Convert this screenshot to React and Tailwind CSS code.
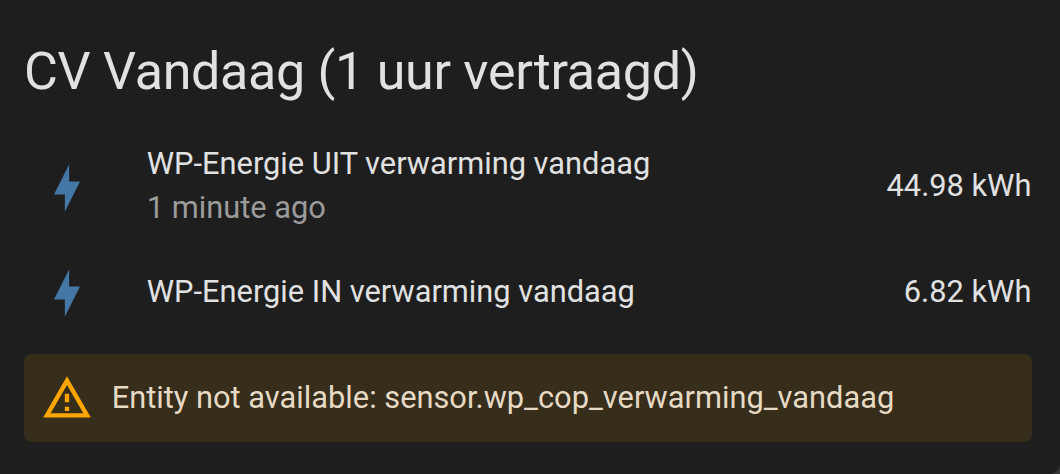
import React from 'react';

const entities = [
  { name: 'WP-Energie UIT verwarming vandaag', secondary: '1 minute ago', value: '44.98 kWh' },
  { name: 'WP-Energie IN verwarming vandaag', value: '6.82 kWh' },
];

function FlashIcon({ className }) {
  return (
    <svg viewBox="0 0 24 24" className={`w-[52px] h-[52px] shrink-0 fill-[#4477a4] ${className}`}>
      <path d="M11 15H6L13 1V9H18L11 23V15Z" />
    </svg>
  );
}

function AlertIcon() {
  return (
    <svg viewBox="0 0 24 24" className="w-[52px] h-[52px] -mt-px shrink-0 fill-[#ffa600]">
      <path d="M12,2L1,21H23M12,6L19.53,19H4.47M11,10V14H13V10M11,16V18H13V16" />
    </svg>
  );
}

function EntityRow({ name, secondary, value }) {
  return (
    <div className="flex items-center h-20 pl-[17.4px] pr-[4.6px]">
      <FlashIcon className={secondary ? 'mt-[4px]' : 'mt-[2px]'} />
      <div className="flex-1 ml-[53.4px] leading-[44px]">
        <div>{name}</div>
        {secondary && <div className="text-[#9b9b9b]">{secondary}</div>}
      </div>
      <div>{value}</div>
    </div>
  );
}

export default function App() {
  return (
    <div className="w-[1060px] h-[474px] bg-[#383838] overflow-hidden">
      <div className="w-full h-full bg-[#1e1e1e] rounded-br-[10px] px-6 pt-6 font-[Roboto,sans-serif] text-[30.8px] text-[#e1e1e1] whitespace-nowrap">
        <h1 className="h-[96px] leading-[96px] text-[52px] tracking-[-0.29px]">CV Vandaag (1 uur vertraagd)</h1>
        <div className="flex flex-col gap-[26px] pt-[26px]">
          {entities.map((entity) => (
            <EntityRow key={entity.name} {...entity} />
          ))}
        </div>
        {/* warning for entities that can't be found */}
        <div className="flex items-center h-22 mt-[22px] w-[1008px] pl-[17.4px] rounded-lg bg-[#362d1b] text-[#e6dac5]">
          <AlertIcon />
          <div className="ml-[18.3px]">Entity not available: sensor.wp_cop_verwarming_vandaag</div>
        </div>
      </div>
    </div>
  );
}
